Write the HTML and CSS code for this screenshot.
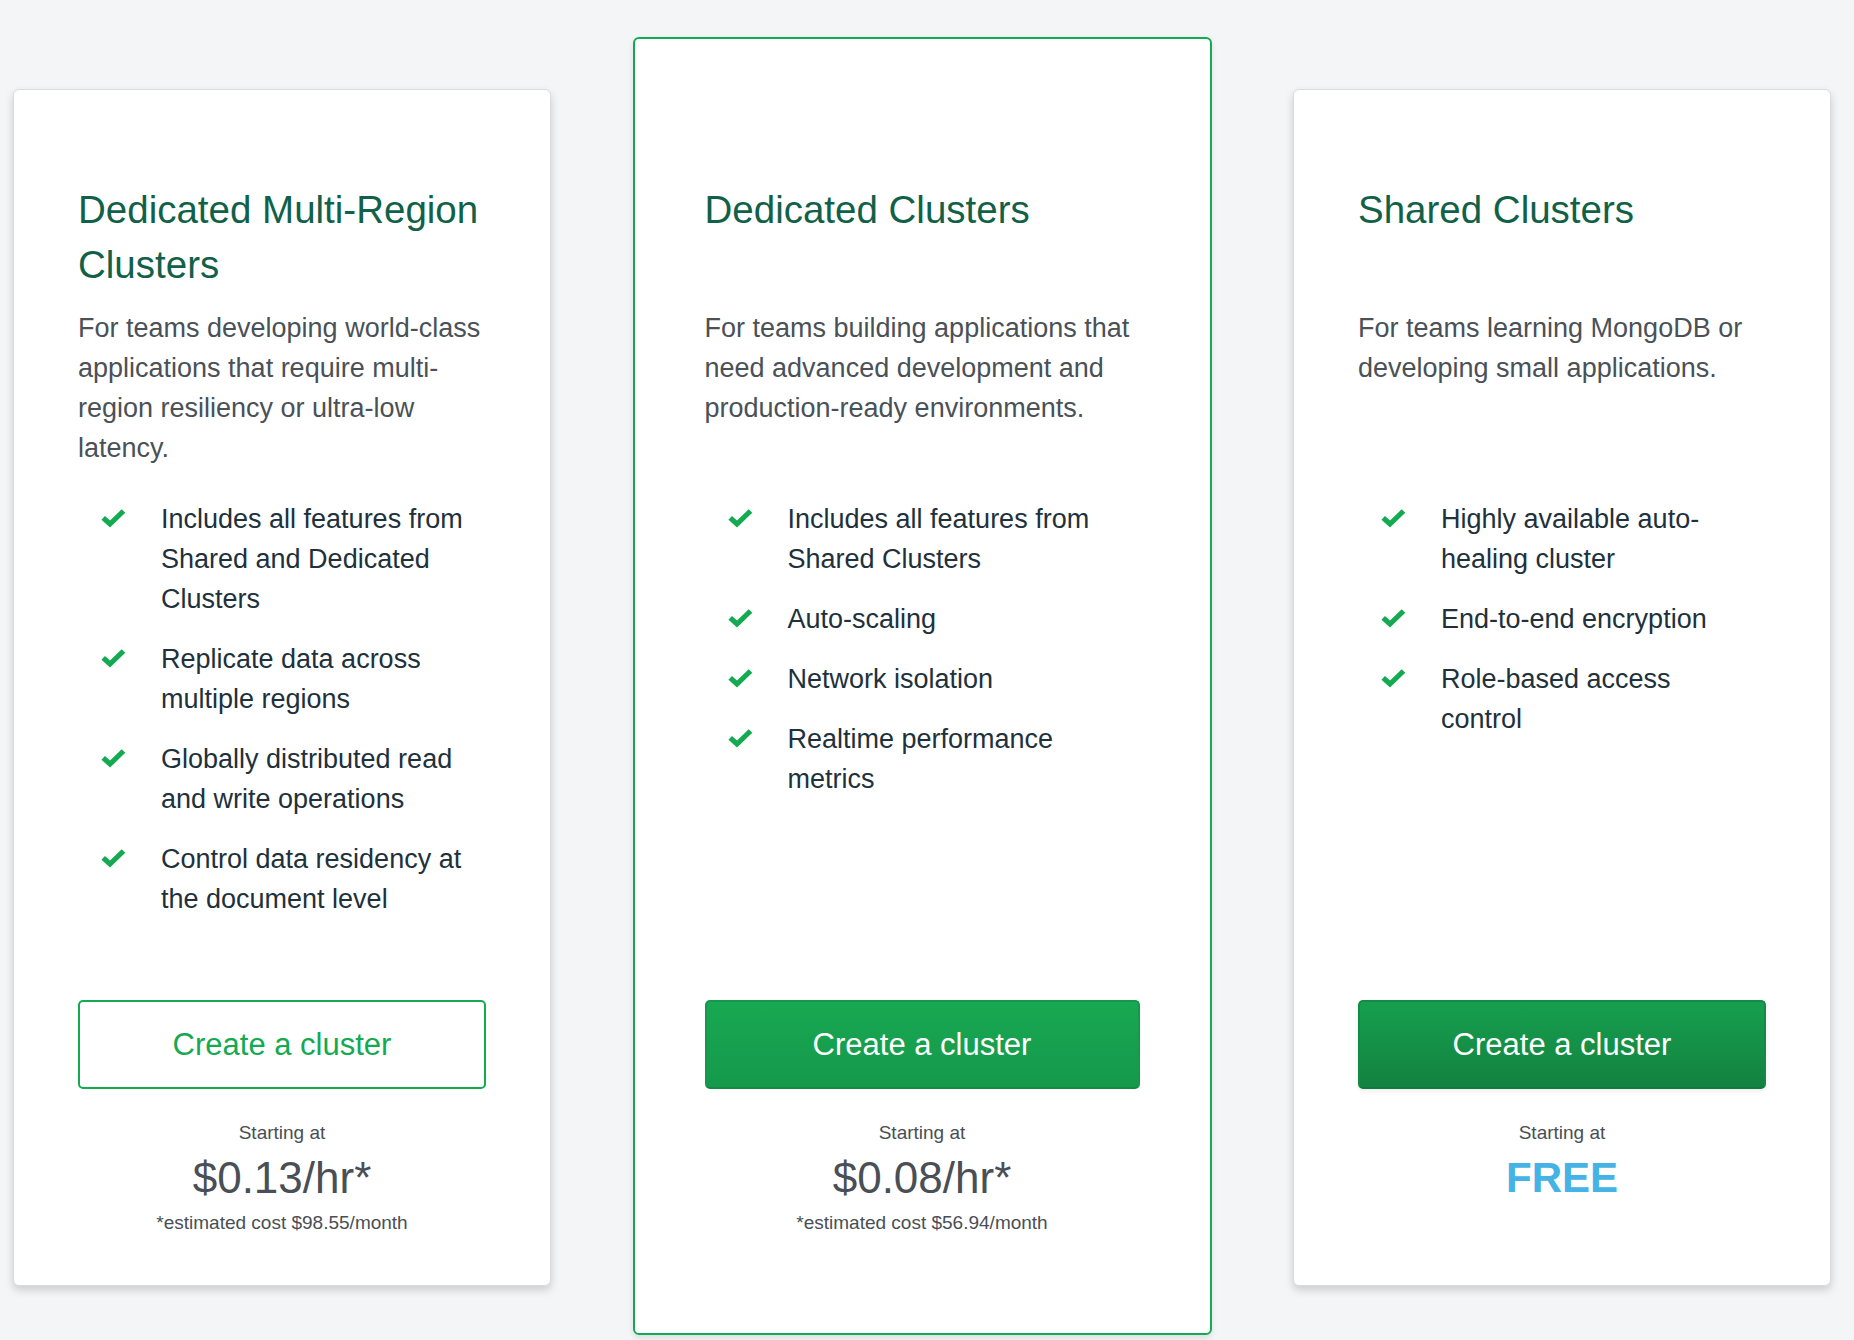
FILE: index.html
```html
<!DOCTYPE html>
<html lang="en">
<head>
<meta charset="utf-8">
<title>Cluster plans</title>
<link rel="stylesheet" href="styles.css">
</head>
<body>
<div class="plans">
  <section class="card card--side">
    <h2 class="card__title">Dedicated Multi-Region Clusters</h2>
    <p class="card__desc">For teams developing world-class applications that require multi-region resiliency or ultra-low latency.</p>
    <ul class="features">
      <li class="feature"><span class="feature__icon"><svg width="25" height="20" viewBox="0 0 25 20"><polyline points="2.2,9.8 9,16 22.5,3" fill="none" stroke="#13aa52" stroke-width="5.2"/></svg></span><span class="feature__text">Includes all features from Shared and Dedicated Clusters</span></li>
      <li class="feature"><span class="feature__icon"><svg width="25" height="20" viewBox="0 0 25 20"><polyline points="2.2,9.8 9,16 22.5,3" fill="none" stroke="#13aa52" stroke-width="5.2"/></svg></span><span class="feature__text">Replicate data across multiple regions</span></li>
      <li class="feature"><span class="feature__icon"><svg width="25" height="20" viewBox="0 0 25 20"><polyline points="2.2,9.8 9,16 22.5,3" fill="none" stroke="#13aa52" stroke-width="5.2"/></svg></span><span class="feature__text">Globally distributed read and write operations</span></li>
      <li class="feature"><span class="feature__icon"><svg width="25" height="20" viewBox="0 0 25 20"><polyline points="2.2,9.8 9,16 22.5,3" fill="none" stroke="#13aa52" stroke-width="5.2"/></svg></span><span class="feature__text">Control data residency at the document level</span></li>
    </ul>
    <a class="btn btn--outline">Create a cluster</a>
    <div class="pricing">
      <div class="pricing__label">Starting at</div>
      <div class="pricing__price">$0.13/hr*</div>
      <div class="pricing__note">*estimated cost $98.55/month</div>
    </div>
  </section>

  <section class="card card--featured">
    <h2 class="card__title">Dedicated Clusters</h2>
    <p class="card__desc">For teams building applications that need advanced development and production-ready environments.</p>
    <ul class="features">
      <li class="feature"><span class="feature__icon"><svg width="25" height="20" viewBox="0 0 25 20"><polyline points="2.2,9.8 9,16 22.5,3" fill="none" stroke="#13aa52" stroke-width="5.2"/></svg></span><span class="feature__text">Includes all features from Shared Clusters</span></li>
      <li class="feature"><span class="feature__icon"><svg width="25" height="20" viewBox="0 0 25 20"><polyline points="2.2,9.8 9,16 22.5,3" fill="none" stroke="#13aa52" stroke-width="5.2"/></svg></span><span class="feature__text">Auto-scaling</span></li>
      <li class="feature"><span class="feature__icon"><svg width="25" height="20" viewBox="0 0 25 20"><polyline points="2.2,9.8 9,16 22.5,3" fill="none" stroke="#13aa52" stroke-width="5.2"/></svg></span><span class="feature__text">Network isolation</span></li>
      <li class="feature"><span class="feature__icon"><svg width="25" height="20" viewBox="0 0 25 20"><polyline points="2.2,9.8 9,16 22.5,3" fill="none" stroke="#13aa52" stroke-width="5.2"/></svg></span><span class="feature__text">Realtime performance metrics</span></li>
    </ul>
    <a class="btn btn--primary">Create a cluster</a>
    <div class="pricing">
      <div class="pricing__label">Starting at</div>
      <div class="pricing__price">$0.08/hr*</div>
      <div class="pricing__note">*estimated cost $56.94/month</div>
    </div>
  </section>

  <section class="card card--side">
    <h2 class="card__title">Shared Clusters</h2>
    <p class="card__desc">For teams learning MongoDB or developing small applications.</p>
    <ul class="features">
      <li class="feature"><span class="feature__icon"><svg width="25" height="20" viewBox="0 0 25 20"><polyline points="2.2,9.8 9,16 22.5,3" fill="none" stroke="#13aa52" stroke-width="5.2"/></svg></span><span class="feature__text">Highly available auto-healing cluster</span></li>
      <li class="feature"><span class="feature__icon"><svg width="25" height="20" viewBox="0 0 25 20"><polyline points="2.2,9.8 9,16 22.5,3" fill="none" stroke="#13aa52" stroke-width="5.2"/></svg></span><span class="feature__text">End-to-end encryption</span></li>
      <li class="feature"><span class="feature__icon"><svg width="25" height="20" viewBox="0 0 25 20"><polyline points="2.2,9.8 9,16 22.5,3" fill="none" stroke="#13aa52" stroke-width="5.2"/></svg></span><span class="feature__text">Role-based access control</span></li>
    </ul>
    <a class="btn btn--dark">Create a cluster</a>
    <div class="pricing">
      <div class="pricing__label">Starting at</div>
      <div class="pricing__price pricing__price--free">FREE</div>
    </div>
  </section>
</div>
</body>
</html>
```

FILE: styles.css
```css
* { box-sizing: border-box; }

html, body {
  margin: 0;
  padding: 0;
  background: #f4f5f6;
  font-family: "Liberation Sans", Arial, sans-serif;
  height: 100%;
  overflow: hidden;
}

.plans {
  display: flex;
  align-items: flex-start;
  gap: 81.5px;
  padding: 37px 0 0 13px;
}

.card {
  display: flex;
  flex-direction: column;
  background: #ffffff;
  border-radius: 6px;
}

.card--side {
  width: 538px;
  margin-top: 52px;
  border: 1px solid #d9dcdf;
  padding: 92px 64px 50px 64px;
  box-shadow: 0 4px 8px rgba(0, 0, 0, 0.17);
}

.card--featured {
  width: 579px;
  border: 2px solid #13aa52;
  padding: 143px 70px 98px 70px;
  box-shadow: 0 3px 6px rgba(0, 0, 0, 0.10);
}

.card__title {
  margin: 0 0 16px 0;
  min-height: 110px;
  font-size: 38.5px;
  line-height: 55px;
  font-weight: normal;
  color: #116149;
}

.card__desc {
  margin: 0 0 31px 0;
  min-height: 160px;
  font-size: 27px;
  line-height: 40px;
  color: #4a5157;
}

.features {
  list-style: none;
  margin: 0;
  padding: 0 16px 0 23px;
  min-height: 501px;
}

.feature {
  display: flex;
  margin-bottom: 20px;
  font-size: 27px;
  line-height: 40px;
  color: #21313c;
}

.feature__icon {
  flex: none;
  width: 60px;
  padding-top: 9px;
  line-height: 0;
}

.feature__text {
  flex: 1;
}

.btn {
  display: block;
  height: 89px;
  border-radius: 5px;
  border: 2px solid #13aa52;
  font-size: 31px;
  line-height: 85px;
  text-align: center;
  cursor: pointer;
}

.btn--outline {
  background: #ffffff;
  color: #13aa52;
}

.btn--primary {
  background: linear-gradient(#18a852, #15994b);
  border-color: #14984b;
  border-bottom-color: #118a43;
  color: #ffffff;
}

.btn--dark {
  background: linear-gradient(#169f4e, #138240);
  border-color: #138a45;
  border-bottom-color: #117a3c;
  color: #ffffff;
  box-shadow: 0 2px 4px rgba(0, 0, 0, 0.08);
}

.pricing {
  margin-top: 32px;
  min-height: 114px;
  text-align: center;
  color: #494f55;
}

.pricing__label {
  font-size: 19px;
  line-height: 24px;
}

.pricing__price {
  margin-top: 8px;
  font-size: 44px;
  line-height: 50px;
}

.pricing__price--free {
  font-size: 42px;
  font-weight: bold;
  color: #45b3e6;
}

.pricing__note {
  margin-top: 8px;
  font-size: 19px;
  line-height: 24px;
}
```
